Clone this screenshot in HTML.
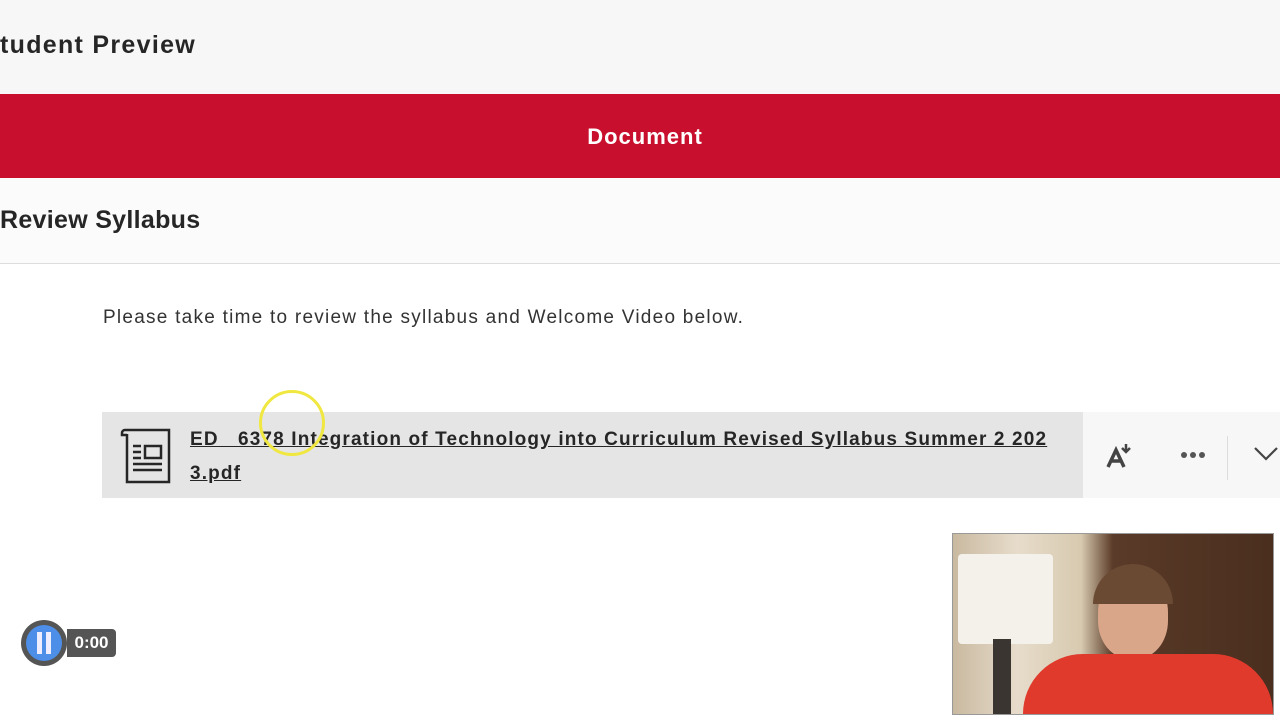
<!DOCTYPE html>
<html><head><style>
body{margin:0;width:1280px;height:720px;overflow:hidden;background:#fff;font-family:"Liberation Sans",sans-serif;position:relative}
.top{position:absolute;left:0;top:0;width:1280px;height:94px;background:#f7f7f7}
.top span{position:absolute;left:0;top:31px;font-size:25px;color:#262626;font-weight:bold;letter-spacing:1.3px}
.bar{position:absolute;left:0;top:94px;width:1280px;height:84px;background:#c8102e;color:#fff;text-align:center;line-height:86px;font-size:22px;font-weight:bold;letter-spacing:1px;padding-left:10px;box-sizing:border-box}
.sub{position:absolute;left:0;top:178px;width:1280px;height:85px;background:#fbfbfb;border-bottom:1px solid #ddd}
.sub span{position:absolute;left:0;top:28px;font-size:25px;color:#262626;font-weight:bold;letter-spacing:0.3px}
.p{position:absolute;left:103px;top:307px;font-size:19px;color:#333;letter-spacing:1.25px}
.file{position:absolute;left:102px;top:412px;width:981px;height:86px;background:#e5e5e5}
.file a{position:absolute;left:88px;top:11px;width:900px;font-size:19px;font-weight:bold;color:#262626;text-decoration:underline;line-height:34px;letter-spacing:1.15px;white-space:nowrap}
.act{position:absolute;left:1083px;top:412px;width:197px;height:86px;background:#f7f7f7}
</style></head><body>
<div class="top"><span>tudent Preview</span></div>
<div class="bar">Document</div>
<div class="sub"><span>Review Syllabus</span></div>
<div class="p">Please take time to review the syllabus and Welcome Video below.</div>
<div class="file">
<svg style="position:absolute;left:15px;top:14px" width="58" height="58" viewBox="0 0 58 58" fill="none" stroke="#262626" stroke-width="2.5"><path d="M8 4h44v52H10V8M8 4a3 3 0 0 0-3 3v2h5"/><path d="M16 20h8M16 26h8M16 32h8M16 38h29M16 44h29" /><rect x="28" y="20" width="16" height="12"/></svg>
<a>ED &nbsp; 6378 Integration of Technology into Curriculum Revised Syllabus Summer 2 202<br>3.pdf</a>
</div>
<div class="act">
<svg style="position:absolute;left:22px;top:30px" width="28" height="28" viewBox="0 0 28 28"><path d="M3 25L11 8L19 25M7 19h9" stroke="#444" stroke-width="3.5" fill="none"/><path d="M21 2v7M17 6l4 4 4-4" stroke="#444" stroke-width="2.5" fill="none"/></svg>
<div style="position:absolute;left:98px;top:40px;font-size:0"><span style="display:inline-block;width:6px;height:6px;border-radius:3px;background:#555;margin-right:3px"></span><span style="display:inline-block;width:6px;height:6px;border-radius:3px;background:#555;margin-right:3px"></span><span style="display:inline-block;width:6px;height:6px;border-radius:3px;background:#555"></span></div>
<div style="position:absolute;left:144px;top:24px;width:1px;height:44px;background:#ddd"></div>
<svg style="position:absolute;left:170px;top:34px" width="26" height="16"><path d="M2 2l11 11L24 2" stroke="#444" stroke-width="2.2" fill="none"/></svg>
</div>
<div style="position:absolute;left:259px;top:390px;width:66px;height:66px;border:3px solid #f0e840;border-radius:50%;box-sizing:border-box"></div>
<div style="position:absolute;left:21px;top:620px;width:46px;height:46px;border-radius:50%;background:#555"></div>
<div style="position:absolute;left:26px;top:625px;width:36px;height:36px;border-radius:50%;background:#4d8ee8"></div>
<div style="position:absolute;left:37px;top:632px;width:5px;height:22px;background:#eef"></div>
<div style="position:absolute;left:46px;top:632px;width:5px;height:22px;background:#eef"></div>
<div style="position:absolute;left:67px;top:629px;width:49px;height:28px;background:#555;border-radius:0 4px 4px 0;color:#fff;font-size:17px;font-weight:bold;line-height:28px;text-align:center">0:00</div>
<div style="position:absolute;left:952px;top:533px;width:322px;height:182px;border:1px solid #999;box-sizing:border-box;overflow:hidden;background:linear-gradient(90deg,#c9b9a0 0%,#e7dccb 20%,#d8cab0 40%,#5a3a28 50%,#4a2e1e 100%)">
<div style="position:absolute;left:5px;top:20px;width:95px;height:90px;background:#f4f1ea;border-radius:4px"></div>
<div style="position:absolute;left:40px;top:105px;width:18px;height:80px;background:#3a3530"></div>
<div style="position:absolute;left:145px;top:40px;width:70px;height:85px;border-radius:45%;background:#d9a68a"></div>
<div style="position:absolute;left:140px;top:30px;width:80px;height:40px;border-radius:40px 40px 0 0;background:#6b4a33"></div>
<div style="position:absolute;left:70px;top:120px;width:250px;height:80px;border-radius:60px 60px 0 0;background:#e03a2c"></div>
</div>
</body></html>
